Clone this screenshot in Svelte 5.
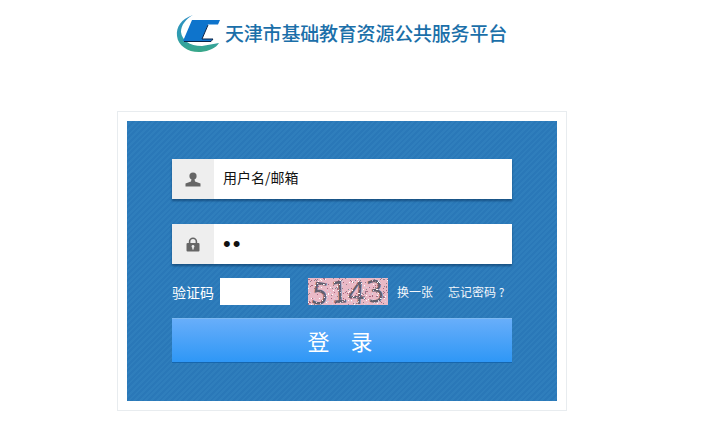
<script>
  let seed = 7;
  const rnd = () => (seed = (seed * 16807) % 2147483647) / 2147483647;
  const dots = Array.from({ length: 320 }, () => ({
    x: Math.floor(rnd() * 80),
    y: Math.floor(rnd() * 27),
    c: ["#8d7f8c", "#fff", "#a8687f", "#d9d3e0"][Math.floor(rnd() * 4)]
  }));
  const digits = [
    { t: "5", x: 2, r: 8 },
    { t: "1", x: 23, r: -2 },
    { t: "4", x: 39, r: 4 },
    { t: "3", x: 60, r: -8 }
  ];
</script>

<div class="page">
  <header class="brand">
    <svg class="logo" viewBox="0 0 48 44" width="48" height="44" aria-hidden="true">
      <defs>
        <linearGradient id="arc" x1="0" y1="0" x2="0" y2="1">
          <stop offset="0" stop-color="#2f8fc4"/>
          <stop offset="0.55" stop-color="#2e9cb0"/>
          <stop offset="1" stop-color="#3aa888"/>
        </linearGradient>
      </defs>
      <path d="M18 3 C6 7 1 15 2 24 C3 34 14 41 26 40 C34 39 41 36 44 31 L27 34 C14 34 7 28 6 20 C6 13 11 7 18 3 Z" fill="url(#arc)"/>
      <path d="M17 8 L45 8 L43 12.5 L33 12.5 L27 27 L38 27 L36 29 L8 29 Z" fill="#0e74cc"/>
      <path d="M33 13 L27 27 L38 27 L36 29.5 L9 29.5" fill="none" stroke="#0a2346" stroke-width="1"/>
    </svg>
    <h1>天津市基础教育资源公共服务平台</h1>
  </header>

  <main class="frame">
    <form class="panel" onsubmit={(e) => e.preventDefault()}>
      <div class="field">
        <span class="addon">
          <svg viewBox="0 0 16 16" width="16" height="16" aria-hidden="true">
            <circle cx="8" cy="5" r="3.6" fill="#666"/>
            <path d="M6.5 8 H9.5 L10 10.5 L15.5 12.5 V15.5 H0.5 V12.5 L6 10.5 Z" fill="#666"/>
          </svg>
        </span>
        <input class="control" type="text" value="用户名/邮箱" aria-label="用户名/邮箱" />
      </div>

      <div class="field second">
        <span class="addon">
          <svg viewBox="0 0 16 16" width="16" height="16" aria-hidden="true">
            <path d="M3.8 7 V5.6 a4.2 4.2 0 0 1 8.4 0 V7 H10.6 V5.6 a2.6 2.6 0 0 0 -5.2 0 V7 Z" fill="#666"/>
            <rect x="1.5" y="7" width="13" height="8.5" rx="1" fill="#666"/>
            <circle cx="8" cy="10.4" r="1.4" fill="#eee"/>
            <rect x="7.3" y="10.5" width="1.4" height="3" fill="#eee"/>
          </svg>
        </span>
        <input class="control password" type="password" value="12" aria-label="密码" />
      </div>

      <div class="captcha-row">
        <label class="label" for="code">验证码</label>
        <input id="code" class="code" type="text" />
        <svg class="captcha" viewBox="0 0 80 27" width="80" height="27" role="img" aria-label="验证码图片">
          <rect width="80" height="27" fill="#eab9c6"/>
          {#each digits as d}
            <text transform={`translate(${d.x} 25) rotate(${d.r}) scale(1.15 1.25)`} class="digit">{d.t}</text>
          {/each}
          {#each dots as d}
            <rect x={d.x} y={d.y} width="1" height="1" fill={d.c}/>
          {/each}
        </svg>
        <a class="link swap" href="#swap">换一张</a>
        <a class="link forgot" href="#forgot">忘记密码 ?</a>
      </div>

      <button class="submit" type="submit">登 录</button>
    </form>
  </main>
</div>

<style>
  :global(body) {
    margin: 0;
    background: #fff;
    font-family: "Noto Sans CJK SC", "Noto Sans", sans-serif;
  }
  .page {
    width: 717px;
    height: 430px;
    display: flex;
    flex-direction: column;
  }
  .brand {
    height: 111px;
    box-sizing: border-box;
    padding: 12px 0 0 175px;
    display: flex;
    align-items: flex-start;
  }
  .logo {
    flex: none;
  }
  h1 {
    margin: 6px 0 0 2px;
    font-size: 19px;
    line-height: 30px;
    letter-spacing: -0.2px;
    font-weight: 500;
    color: #1b6fa9;
    white-space: nowrap;
  }
  .frame {
    width: 450px;
    height: 300px;
    margin-left: 117px;
    box-sizing: border-box;
    border: 1px solid #e8ecef;
    padding: 9px;
    background: #fff;
  }
  .panel {
    height: 280px;
    box-sizing: border-box;
    padding: 38px 45px 0;
    background: repeating-linear-gradient(135deg, #2a78b8 0 2px, #2f7ebc 2px 4px);
  }
  .field {
    display: flex;
    height: 40px;
    width: 340px;
    background: #fff;
    box-shadow: 0 2px 2px rgba(10, 50, 90, 0.55);
  }
  .second {
    margin-top: 25px;
  }
  .addon {
    flex: none;
    width: 42px;
    background: #eee;
    display: flex;
    align-items: center;
    justify-content: center;
  }
  .control {
    flex: 1;
    min-width: 0;
    border: 0;
    outline: 0;
    padding: 0 0 4px 9px;
    font: 14px "Noto Sans CJK SC", sans-serif;
    color: #111;
    background: #fff;
  }
  .password {
    font: 22px "Liberation Sans", sans-serif;
    letter-spacing: 2px;
    padding-left: 9px;
    padding-bottom: 0;
  }
  .captcha-row {
    display: flex;
    align-items: center;
    height: 27px;
    margin-top: 14px;
    color: #fff;
    font-size: 12px;
  }
  .label {
    width: 48px;
    font-size: 14px;
    flex: none;
  }
  .code {
    width: 70px;
    height: 27px;
    flex: none;
    box-sizing: border-box;
    border: 0;
    outline: 0;
    padding: 0 6px;
    background: #fff;
  }
  .captcha {
    flex: none;
    margin-left: 18px;
    overflow: visible;
  }
  .digit {
    font: 24px "DejaVu Sans", sans-serif;
    fill: #625f6d;
  }
  .link {
    color: #f2f6fb;
    text-decoration: none;
    white-space: nowrap;
  }
  .swap {
    margin-left: 9px;
  }
  .forgot {
    margin-left: 15px;
  }
  .submit {
    display: block;
    width: 340px;
    height: 45px;
    margin-top: 13px;
    border: 0;
    border-top: 1px solid #7db9f2;
    border-bottom: 1px solid #1666ad;
    padding: 0 4px 2px 0;
    background: linear-gradient(#68aefa, #2e97f6);
    color: #fff;
    font: 22px "Noto Sans CJK SC", sans-serif;
    word-spacing: 16px;
    cursor: pointer;
  }
</style>
